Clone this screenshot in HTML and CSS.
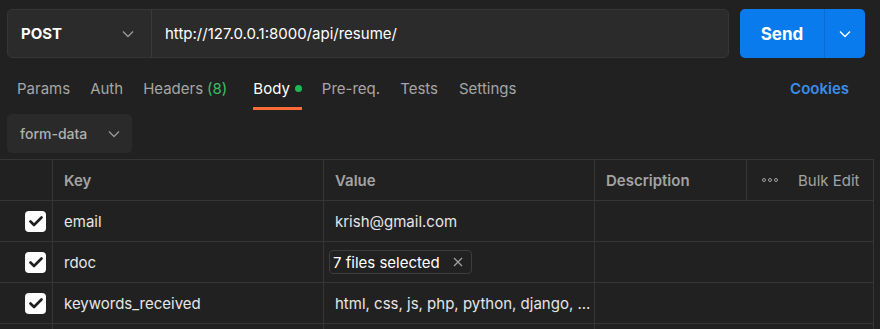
FILE: index.html
```html
<!DOCTYPE html>
<html>
<head>
<meta charset="utf-8">
<link rel="stylesheet" href="styles.css">
</head>
<body>
<div class="page">
  <div class="topbar">
    <div class="urlbox">
      <div class="method">
        <span class="method-name">POST</span>
        <svg class="chev" width="12" height="8" viewBox="0 0 12 8"><path d="M1 1.5 L6 6.5 L11 1.5" fill="none" stroke="#9a9a9a" stroke-width="1.3"/></svg>
      </div>
      <div class="url">http://127.0.0.1:8000/api/resume/</div>
    </div>
    <div class="send">
      <span class="send-label">Send</span>
      <span class="send-drop"><svg width="12" height="8" viewBox="0 0 12 8"><path d="M1 1.5 L6 6.5 L11 1.5" fill="none" stroke="#ffffff" stroke-width="1.4"/></svg></span>
    </div>
  </div>

  <div class="tabs">
    <div class="tablist">
      <span class="tab">Params</span>
      <span class="tab">Auth</span>
      <span class="tab">Headers <span class="count">(8)</span></span>
      <span class="tab active">Body <span class="dot"></span></span>
      <span class="tab">Pre-req.</span>
      <span class="tab">Tests</span>
      <span class="tab">Settings</span>
    </div>
    <span class="cookies">Cookies</span>
  </div>

  <div class="bodytype">
    <div class="select">
      <span>form-data</span>
      <svg width="12" height="8" viewBox="0 0 12 8"><path d="M1 1.5 L6 6.5 L11 1.5" fill="none" stroke="#9a9a9a" stroke-width="1.3"/></svg>
    </div>
  </div>

  <div class="table">
    <div class="row head">
      <div class="cell chk"></div>
      <div class="cell key">Key</div>
      <div class="cell val">Value</div>
      <div class="cell desc">Description</div>
      <div class="cell bulk"><span class="dots"><i></i><i></i><i></i></span><span>Bulk Edit</span></div>
    </div>
    <div class="row">
      <div class="cell chk"><span class="box"><svg width="14" height="11" viewBox="0 0 14 11"><path d="M1.5 5.5 L5 9 L12.5 1.5" fill="none" stroke="#1e1e1e" stroke-width="2.6" stroke-linecap="round" stroke-linejoin="round"/></svg></span></div>
      <div class="cell key">email</div>
      <div class="cell val">krish@gmail.com</div>
      <div class="cell descwide"></div>
    </div>
    <div class="row">
      <div class="cell chk"><span class="box"><svg width="14" height="11" viewBox="0 0 14 11"><path d="M1.5 5.5 L5 9 L12.5 1.5" fill="none" stroke="#1e1e1e" stroke-width="2.6" stroke-linecap="round" stroke-linejoin="round"/></svg></span></div>
      <div class="cell key">rdoc</div>
      <div class="cell val filecell"><span class="chip">7 files selected <svg width="10" height="10" viewBox="0 0 10 10"><path d="M1 1 L9 9 M9 1 L1 9" stroke="#a0a0a0" stroke-width="1.3"/></svg></span></div>
      <div class="cell descwide"></div>
    </div>
    <div class="row">
      <div class="cell chk"><span class="box"><svg width="14" height="11" viewBox="0 0 14 11"><path d="M1.5 5.5 L5 9 L12.5 1.5" fill="none" stroke="#1e1e1e" stroke-width="2.6" stroke-linecap="round" stroke-linejoin="round"/></svg></span></div>
      <div class="cell key">keywords_received</div>
      <div class="cell val">html, css, js, php, python, django, ...</div>
      <div class="cell descwide"></div>
    </div>
    <div class="row stub">
      <div class="cell chk"></div>
      <div class="cell key"></div>
      <div class="cell val"></div>
      <div class="cell descwide"></div>
    </div>
  </div>
</div>
</body>
</html>
```

FILE: styles.css
```css
* { box-sizing: border-box; }
html, body { margin: 0; padding: 0; }
body {
  background: #212121;
  font-family: Inter, "Noto Sans", sans-serif;
  font-size: 15px;
  color: #e6e6e6;
  width: 880px;
  height: 329px;
  overflow: hidden;
}
.page { width: 880px; }

.topbar {
  display: flex;
  gap: 11px;
  padding: 9px 0 0 7px;
}
.urlbox {
  display: flex;
  width: 722px;
  height: 49px;
  background: #2b2b2b;
  border: 1px solid #363636;
  border-radius: 5px;
}
.method {
  width: 144px;
  display: flex;
  align-items: center;
  justify-content: space-between;
  padding: 0 17px 0 13px;
  border-right: 1px solid #3a3a3a;
}
.method-name { font-weight: 700; color: #ffffff; font-size: 15px; }
.url {
  display: flex;
  align-items: center;
  padding-left: 13px;
  color: #ffffff;
}
.send {
  display: flex;
  width: 125px;
  height: 49px;
  background: #097bed;
  border-radius: 5px;
  color: #fff;
}
.send-label {
  width: 85px;
  display: flex;
  align-items: center;
  justify-content: center;
  font-weight: 700;
  font-size: 17px;
  border-right: 1px solid #0a6cd0;
}
.send-drop {
  flex: 1;
  display: flex;
  align-items: center;
  justify-content: center;
}

.tabs {
  display: flex;
  justify-content: space-between;
  align-items: stretch;
  height: 52px;
  padding: 0 31px 0 17px;
}
.tablist { display: flex; gap: 20px; }
.tab {
  position: relative;
  display: flex;
  align-items: center;
  gap: 5px;
  padding-top: 8px;
  color: #a6a6a6;
}
.tab.active { color: #ffffff; }
.tab.active::after {
  content: "";
  position: absolute;
  left: 0; right: 0;
  bottom: 0;
  height: 3px;
  background: #ff6c37;
}
.tablist .tab:nth-child(4) { margin-left: 6px; }
.tablist .tab:nth-child(7) { margin-left: 1px; }
.count { color: #3fbf65; margin-left: -1px; }
.dot {
  display: inline-block;
  width: 7px; height: 7px;
  border-radius: 50%;
  background: #1db954;
}
.cookies {
  display: flex;
  align-items: center;
  padding-top: 8px;
  color: #3b8dea;
  font-weight: 600;
}

.bodytype { padding: 4px 0 6px 7px; }
.select {
  display: inline-flex;
  align-items: center;
  gap: 21px;
  width: 125px;
  height: 39px;
  padding: 0 0 0 13px;
  background: #2a2a2a;
  border-radius: 5px;
  color: #b0b0b0;
  font-weight: 500;
  font-size: 14px;
}

.table {
  width: 874px;
  border-top: 1px solid #353535;
  border-right: 1px solid #353535;
}
.row {
  display: flex;
  height: 41px;
  border-bottom: 1px solid #353535;
}
.cell {
  display: flex;
  align-items: center;
  border-right: 1px solid #353535;
  padding-left: 11px;
}
.cell:last-child { border-right: none; }
.chk { width: 53px; justify-content: flex-end; padding: 0 6px 0 0; }
.key { width: 271px; }
.val { width: 271px; }
.desc { width: 152px; }
.descwide { flex: 1; }
.bulk { flex: 1; gap: 20px; padding-left: 15px; color: #a6a6a6; }
.head .cell { color: #a3a3a3; font-weight: 600; }
.head .bulk { font-weight: 400; }
.dots { display: flex; gap: 2px; }
.dots i {
  display: block;
  width: 4px; height: 4px;
  border: 1px solid #a0a0a0;
  border-radius: 50%;
}
.box {
  width: 21px; height: 21px;
  background: #ffffff;
  border-radius: 4px;
  display: flex;
  align-items: center;
  justify-content: center;
}
.filecell { padding-left: 5px; }
.chip {
  display: inline-flex;
  align-items: center;
  gap: 13px;
  height: 24px;
  padding: 0 8px 0 3px;
  border: 1px solid #3d3d3d;
  border-radius: 4px;
  color: #ffffff;
}
.stub { height: 10px; border-bottom: none; }
```
